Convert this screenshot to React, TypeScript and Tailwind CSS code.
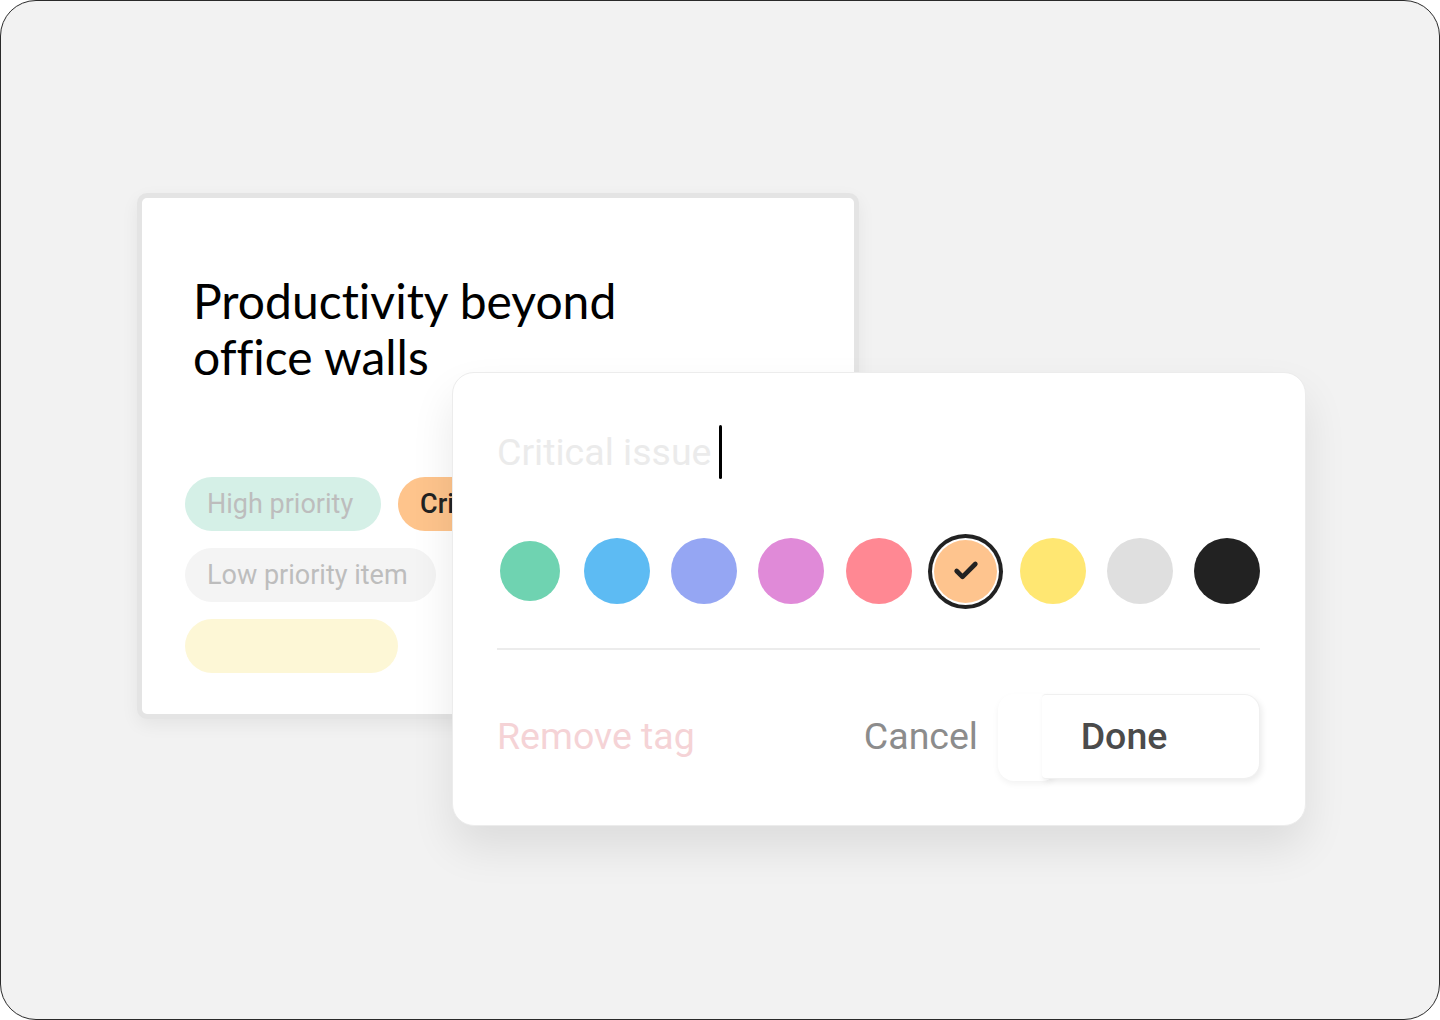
import { Check } from "lucide-react"

const swatches = [
  { color: "bg-[#6fd3b1]", size: "w-[60px] h-[60px]" },
  { color: "bg-[#5dbbf3]", size: "w-[66px] h-[66px]" },
  { color: "bg-[#95a6f3]", size: "w-[66px] h-[66px]" },
  { color: "bg-[#e08ad8]", size: "w-[66px] h-[66px]" },
  { color: "bg-[#ff8893]", size: "w-[66px] h-[66px]" },
  { color: "bg-[#fec48e]", size: "w-[63px] h-[63px]", selected: true },
  { color: "bg-[#ffe772]", size: "w-[66px] h-[66px]" },
  { color: "bg-[#dfdfdf]", size: "w-[66px] h-[66px]" },
  { color: "bg-[#222222]", size: "w-[66px] h-[66px]" },
]

export default function App() {
  return (
    <div className="w-[1440px] h-[1020px] bg-white">
      <div className="relative w-full h-full rounded-[36px] border border-[#2a2a2a] bg-[#f2f2f2] overflow-hidden pt-[192px] pl-[136px]">
        {/* Back card */}
        <div className="w-[722px] h-[526px] rounded-[10px] border-[5px] border-[#e4e4e4] bg-white shadow-[0_6px_18px_rgba(0,0,0,0.06)] pl-[43px] pt-[75px] overflow-hidden">
          <h1 className="ml-[8px] text-[48px] leading-[56px] text-black font-['Lato',sans-serif] [font-variant-ligatures:none]">
            Productivity beyond
            <br />
            office walls
          </h1>

          <div className="mt-[92px] flex flex-col gap-[17px] font-['Roboto',sans-serif] text-[27px]">
            <div className="flex gap-[17px]">
              <span className="h-[54px] w-[196px] flex items-center pl-[22px] rounded-full bg-[#d5f0e7] text-[#bdbdbd] whitespace-nowrap">
                High priority
              </span>
              <span className="h-[54px] flex items-center px-[22px] rounded-full bg-[#fec48c] text-[#222] font-medium whitespace-nowrap">
                Critical issue
              </span>
            </div>
            <div className="flex">
              <span className="h-[54px] w-[251px] flex items-center pl-[22px] rounded-full bg-[#f4f4f4] text-[#bdbdbd] whitespace-nowrap">
                Low priority item
              </span>
            </div>
            <div className="flex">
              <span className="h-[54px] w-[213px] rounded-full bg-[#fdf7d6]" />
            </div>
          </div>
        </div>

        {/* Tag editor popup */}
        <div className="absolute left-[451px] top-[371px] w-[854px] h-[454px] rounded-[22px] border border-[#ececec] bg-white shadow-[0_22px_44px_rgba(0,0,0,0.09)] pl-[44px] pr-[45px] pt-[52px] font-['Roboto',sans-serif]">
          <div className="flex items-center h-[54px]">
            <span className="text-[37.5px] text-[#ebebeb]">Critical issue</span>
            <span className="ml-[8px] w-[3px] h-[54px] rounded-full bg-black" />
          </div>

          <div className="mt-[59px] flex items-center justify-between h-[66px]">
            {swatches.map((s, i) => (
              <div key={i} className="w-[66px] h-[66px] flex items-center justify-center">
                <div
                  className={`${s.color} ${s.size} rounded-full flex items-center justify-center ${
                    s.selected ? "shadow-[0_0_0_2px_#fff,0_0_0_6px_#222]" : ""
                  }`}
                >
                  {s.selected && <Check className="w-[28px] h-[28px] text-[#222]" strokeWidth={4} />}
                </div>
              </div>
            ))}
          </div>

          <div className="mt-[44px] h-[2px] bg-[#ececec]" />

          <div className="mt-[44px] flex items-center justify-between">
            <span className="text-[37.5px] text-[#f5d3d6]">Remove tag</span>
            <div className="flex items-center gap-[20px]">
              <span className="text-[37.5px] text-[#8c8c8c]">Cancel</span>
              <div className="relative w-[262px] h-[85px]">
                <div className="absolute left-0 top-0 w-[60px] h-[87px] rounded-[16px] bg-white shadow-[0_3px_6px_rgba(0,0,0,0.05)]" />
                <button className="absolute left-[44px] top-0 w-[218px] h-[85px] rounded-r-[16px] rounded-l-[4px] bg-white border border-l-0 border-[#f0f0f0] shadow-[2px_3px_6px_rgba(0,0,0,0.08)] text-[37.5px] font-medium text-[#4b4b4b] pr-[53px]">
                  Done
                </button>
              </div>
            </div>
          </div>
        </div>
      </div>
    </div>
  )
}
